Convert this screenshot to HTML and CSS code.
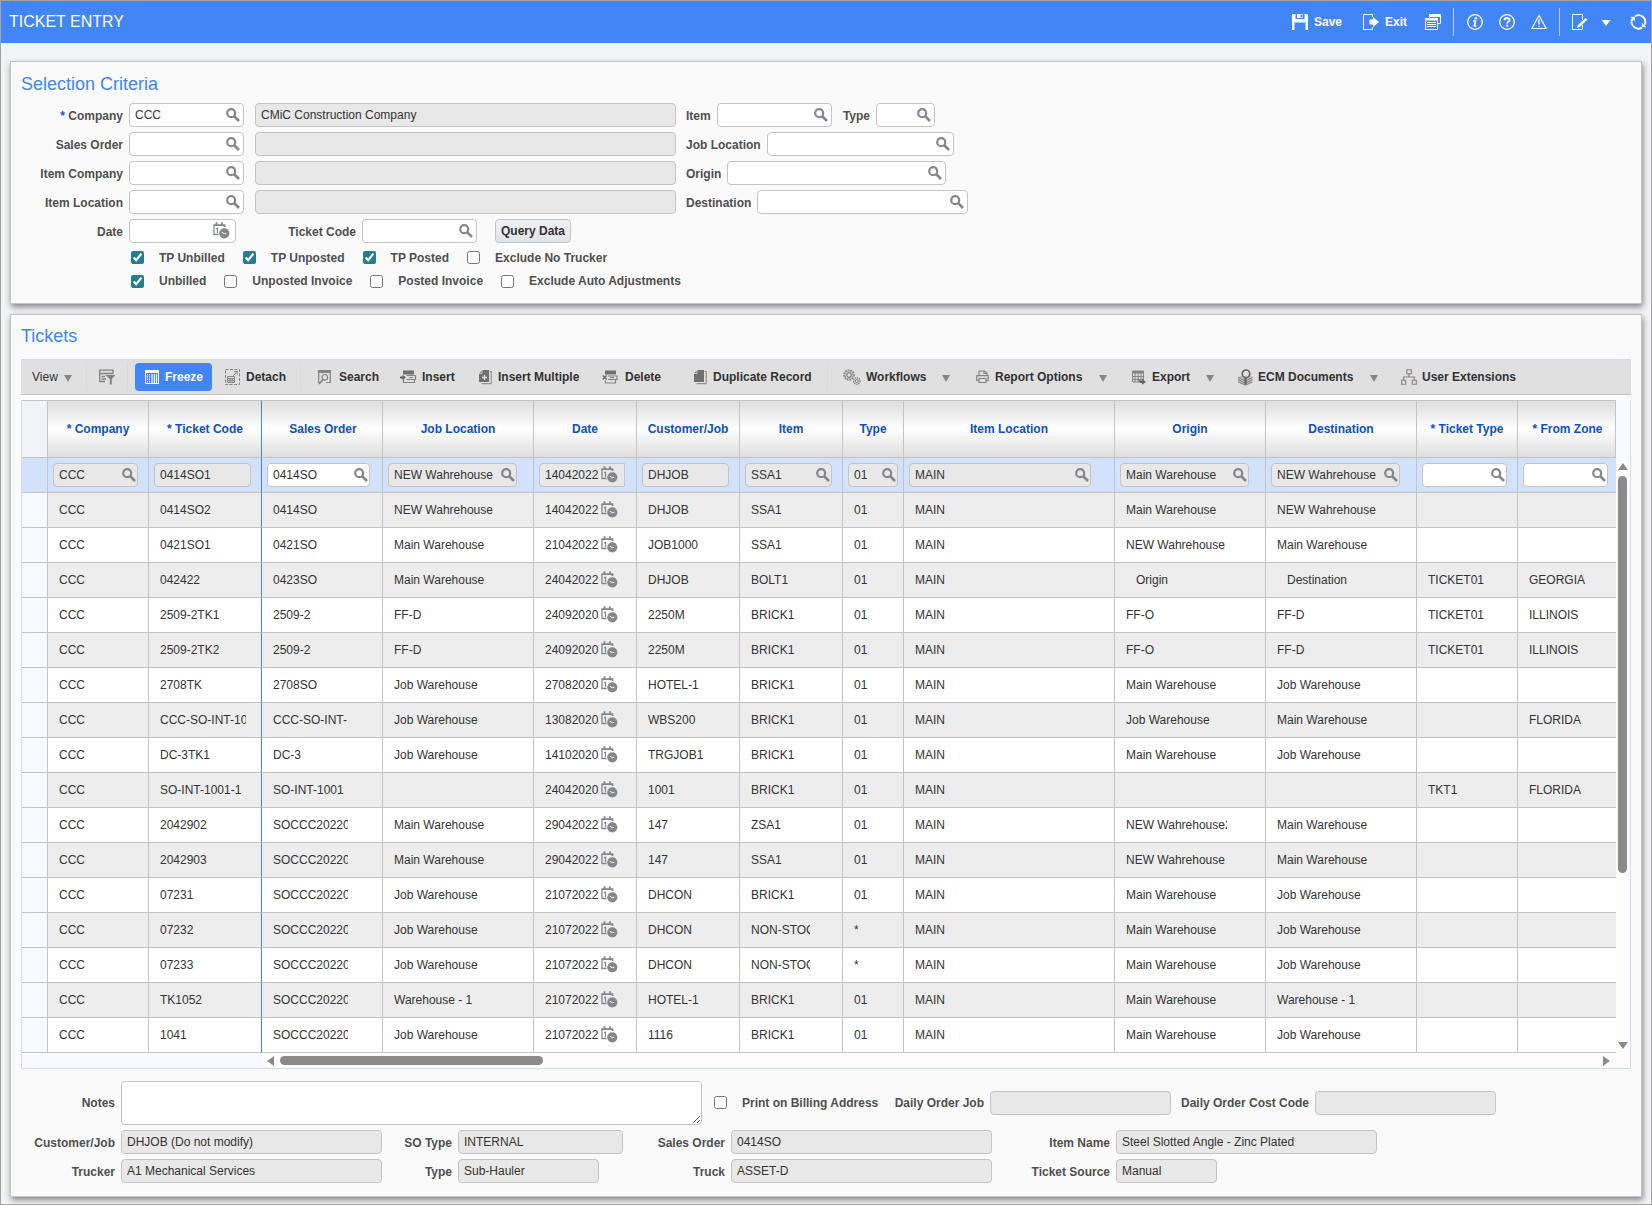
FILE: index.html
```
<!DOCTYPE html>
<html lang="en">
<head>
    <meta charset="UTF-8">
    <meta name="viewport" content="width=device-width, initial-scale=1.0">
    <title>Ticket Entry</title>
    <link rel="stylesheet" href="styles.css">
</head>
<body>
    <svg class="defs" width="0" height="0">
        <symbol id="search" viewBox="0 0 14 14">
            <circle cx="5.2" cy="5.2" r="4" fill="none" stroke="#84888c" stroke-width="2.2"/>
            <path d="M8 8L13 13" stroke="#84888c" stroke-width="2.6"/>
        </symbol>
        <symbol id="calendar" viewBox="0 0 17 17">
            <path d="M5.500 12.500H1V3" fill="none" stroke="#84888c" stroke-width="1.300"/>
            <path d="M.4 3.200H11.500V5" fill="none" stroke="#84888c" stroke-width="1.800"/>
            <path d="M3.500 .3v3M9 .3v3" stroke="#84888c" stroke-width="1.800"/>
            <path d="M3 7l1.500-.8v5" fill="none" stroke="#84888c" stroke-width="1.200"/>
            <circle cx="11.300" cy="11.300" r="5.100" fill="#84888c"/>
            <path d="M8.800 10.200l2.500 1.500 2-.4" fill="none" stroke="#fff"/>
        </symbol>
    </svg>

    <header class="header">
        <h1>TICKET ENTRY</h1>
        <div class="actions">
            <a class="action save">
                <svg width="16" height="16" viewBox="0 0 16 16"><path d="M0 0h15l1 1v15H0z" fill="#fff"/><path d="M3.500 0v5h9V0M2.500 16V8.500h11V16" fill="#4285f4"/><path d="M5 0h6v4H5z" fill="#fff"/><path d="M8.500 .5h2v3h-2z" fill="#4285f4"/></svg>
                Save
            </a>
            <a class="action exit">
                <svg width="16" height="16" viewBox="0 0 16 16"><path d="M9.500 3V.5h-9v15h9V13" fill="none" stroke="#fff"/><path d="M6.500 5.500H10V3l6 5-6 5v-2.500H6.500z" fill="#fff"/></svg>
                Exit
            </a>
            <a class="action list">
                <svg width="16" height="16" viewBox="0 0 16 16"><path d="M4.500 4V.5h11v9H13" fill="none" stroke="#fff"/><path d="M4 .5h12v2.500H4z" fill="#fff"/><path d="M.5 4.500h12v11H.5z" fill="#4285f4" stroke="#fff"/><path d="M0 4h13v2.500H0z" fill="#fff"/><path d="M2 8.500h9M2 10.500h9M2 12.500h9" stroke="#fff"/></svg>
            </a>
            <i class="divider"></i>
            <svg class="info" width="16" height="16" viewBox="0 0 16 16"><circle cx="8" cy="8" r="7.300" fill="none" stroke="#fff" stroke-width="1.300"/><circle cx="9" cy="4.300" r="1.300" fill="#fff"/><path d="M6 7h2.500L7.300 12h2" fill="none" stroke="#fff" stroke-width="1.700"/></svg>
            <svg class="help" width="16" height="16" viewBox="0 0 16 16"><circle cx="8" cy="8" r="7.300" fill="none" stroke="#fff" stroke-width="1.300"/><path d="M5.600 6.300c0-3 4.900-2.900 4.900-.3 0 1.700-2.300 1.600-2.300 3.500" fill="none" stroke="#fff" stroke-width="1.900"/><path d="M7.200 10.700h2v2h-2z" fill="#fff"/></svg>
            <svg class="warn" width="16" height="16" viewBox="0 0 16 16"><path d="M8 1.500L15.200 14.500H.8z" fill="none" stroke="#fff" stroke-width="1.200"/><path d="M8 5.500v5M8 11.700v1.300" stroke="#fff" stroke-width="1.400"/></svg>
            <i class="divider second"></i>
            <svg class="edit" width="16" height="16" viewBox="0 0 16 16"><path d="M10.500 11v4.500H.5V.5h10V6" fill="none" stroke="#fff"/><path d="M5 14l1-3 7.500-7L15.500 5.500 8 12.700z" fill="#fff"/></svg>
            <svg class="down" width="10" height="6" viewBox="0 0 10 6"><path d="M.5 0h9L5 6z" fill="#fff"/></svg>
            <svg class="refresh" width="17" height="16" viewBox="0 0 17 16"><path d="M4.500 13.300A6.600 6.600 0 0 1 2.200 5M5 2.300a6.600 6.600 0 0 1 7.500 .2M13.800 3.700a6.600 6.600 0 0 1 .8 7M12 13.600a6.600 6.600 0 0 1-7.500-.3M12.500 2.500l1.300 1.200" fill="none" stroke="#fff" stroke-width="1.900"/><path d="M.3 2.700h4.700v4.500zM16.500 13.300h-4.700V8.800z" fill="#fff"/></svg>
        </div>
    </header>

    <section class="panel criteria">
        <h2>Selection Criteria</h2>
        <div class="row">
            <label class="w102"><b class="req">*</b> Company</label>
            <div class="field w115"><span>CCC</span><svg><use href="#search"/></svg></div>
            <div class="field off w421"><span>CMiC Construction Company</span></div>
            <label class="right">Item</label>
            <div class="field w115"><span></span><svg><use href="#search"/></svg></div>
            <label class="type">Type</label>
            <div class="field w59"><span></span><svg><use href="#search"/></svg></div>
        </div>
        <div class="row">
            <label class="w102">Sales Order</label>
            <div class="field w115"><span></span><svg><use href="#search"/></svg></div>
            <div class="field off w421"></div>
            <label class="right w75">Job Location</label>
            <div class="field w187"><span></span><svg><use href="#search"/></svg></div>
        </div>
        <div class="row">
            <label class="w102">Item Company</label>
            <div class="field w115"><span></span><svg><use href="#search"/></svg></div>
            <div class="field off w421"></div>
            <label class="right w35">Origin</label>
            <div class="field w219"><span></span><svg><use href="#search"/></svg></div>
        </div>
        <div class="row">
            <label class="w102">Item Location</label>
            <div class="field w115"><span></span><svg><use href="#search"/></svg></div>
            <div class="field off w421"></div>
            <label class="right w65">Destination</label>
            <div class="field w211"><span></span><svg><use href="#search"/></svg></div>
        </div>
        <div class="row">
            <label class="w102">Date</label>
            <div class="field date w107"><span></span><svg class="cal"><use href="#calendar"/></svg></div>
            <label class="w120">Ticket Code</label>
            <div class="field w115"><span></span><svg><use href="#search"/></svg></div>
            <button class="query">Query Data</button>
        </div>
        <div class="checks">
            <label><input type="checkbox" checked>TP Unbilled</label>
            <label><input type="checkbox" checked>TP Unposted</label>
            <label><input type="checkbox" checked>TP Posted</label>
            <label><input type="checkbox">Exclude No Trucker</label>
        </div>
        <div class="checks second">
            <label><input type="checkbox" checked>Unbilled</label>
            <label><input type="checkbox">Unposted Invoice</label>
            <label><input type="checkbox">Posted Invoice</label>
            <label><input type="checkbox">Exclude Auto Adjustments</label>
        </div>
    </section>

    <section class="panel tickets">
        <h2>Tickets</h2>
        <div class="toolbar">
            <div class="tool view sep">View <i class="arrow"></i></div>
            <div class="tool qbe sep">
                <svg width="17" height="16" viewBox="0 0 17 16" fill="none" stroke="#848484" stroke-width="1.300"><path d="M14 5V1.200H.7V12.500H6M.7 4.500H14M2.500 7.500H6M2.500 10H7M0 1.200h14"/><path d="M6.500 6h10l-3.700 4v5.500h-2V10z" fill="#848484" stroke="none"/></svg>
            </div>
            <div class="tool"><a class="freeze">
                <svg width="14" height="14" viewBox="0 0 14 14"><path d="M.5 .5h13v13H.5z" fill="none" stroke="#fff"/><path d="M0 0h14v3H0z" fill="#fff"/><path d="M2.500 4v9M4.500 4v9" stroke="#fff" stroke-dasharray="1.500 .8"/><path d="M7 4v9M9.300 4v9M11.500 4v9" stroke="#fff" stroke-width="1.200"/></svg>Freeze</a></div>
            <div class="tool sep detach">
                <svg width="15" height="16" viewBox="0 0 15 16"><path d="M.5 .5h14v15H.5z" fill="none" stroke="#848484" stroke-dasharray="3 1.500"/><path d="M2.500 7.500h7v6h-7zM2.500 9.500h7M2.500 11.500h7M4.800 9.500v4M7.200 9.500v4M8.500 6.500l3.500-4M9 2.500h3.200v3" fill="none" stroke="#848484"/></svg>Detach</div>
            <div class="tool">
                <svg width="15" height="16" viewBox="0 0 15 16"><path d="M2 13.500H.7V1.500h11.600v12H8" fill="none" stroke="#848484" stroke-width="1.200"/><path d="M0 1h13v3H0z" fill="#848484"/><circle cx="6.800" cy="8.300" r="2.800" fill="none" stroke="#848484" stroke-width="1.200"/><path d="M5 10.500L1 15" stroke="#848484" stroke-width="1.800"/></svg>Search</div>
            <div class="tool">
                <svg width="16" height="16" viewBox="0 0 16 16"><path d="M3 1.500h11v4H3z" fill="#707070"/><path d="M6.500 6.500h9v4h-9M3.500 10.500v3h11v-3M9 8.500h4" fill="none" stroke="#848484" stroke-width="1.200"/><path d="M0 7.500h2.500V5.800l3.500 2.700-3.500 2.700V9.500H0z" fill="#666"/></svg>Insert</div>
            <div class="tool multi">
                <svg width="14" height="16" viewBox="0 0 14 16"><path d="M3.500 1H10v12H0V4.500z" fill="#707070"/><path d="M10.700 2.500h1.500v12.200H2.500" fill="none" stroke="#848484"/><path d="M3 1v3.500H0" fill="none" stroke="#ccc"/><path d="M5.500 6v5M3 8.500h5" stroke="#e0e0e0" stroke-width="1.300"/></svg>Insert Multiple</div>
            <div class="tool">
                <svg width="17" height="16" viewBox="0 0 17 16"><path d="M3 1.500h11v4H3z" fill="#707070"/><path d="M6 7h9v3.500H6M3.500 11.500v2.500h10v-3M8 8.700h4" fill="none" stroke="#848484" stroke-width="1.200"/><path d="M.7 6.500l4 4M4.700 6.500l-4 4" stroke="#666" stroke-width="1.300"/></svg>Delete</div>
            <div class="tool sep dup">
                <svg width="13" height="16" viewBox="0 0 13 16"><path d="M3.500 1H10v12H0V4.500z" fill="#707070"/><path d="M10.700 2.500h1.500v12.200H2.500" fill="none" stroke="#848484"/><path d="M3 1v3.500H0" fill="none" stroke="#ccc"/></svg>Duplicate Record</div>
            <div class="tool">
                <svg class="gear" width="17" height="16" viewBox="0 0 17 16" fill="none" stroke="#848484"><circle cx="6" cy="6" r="5" stroke-width="1.600" stroke-dasharray="1.700 1"/><circle cx="6" cy="6" r="4" stroke-width=".6"/><circle cx="6" cy="6" r="2.300" stroke-width="1.200"/><circle cx="13.800" cy="12" r="3.200" stroke-width="1.400" stroke-dasharray="1.300 .8"/><circle cx="13.800" cy="12" r="1.500"/></svg>Workflows <i class="arrow"></i></div>
            <div class="tool report">
                <svg width="14" height="16" viewBox="0 0 14 16" fill="none" stroke="#848484" stroke-width="1.200"><path d="M3 6V2h5.500L11 4v2M2.500 11.500H.8V6.600h11.400v4.900h-1.700M3 9.500h7v4H3z"/><path d="M8 2v2.500h3"/></svg>Report Options <i class="arrow"></i></div>
            <div class="tool">
                <svg width="14" height="16" viewBox="0 0 14 16"><path d="M.5 2h11v11H.5zM.5 7.500h11M.5 10.300h11M3 2v11M6 2v11M9 2v11" fill="none" stroke="#848484"/><path d="M0 2h12v2.500H0z" fill="#848484"/><path d="M6.500 8c0 3 1 3.800 3.500 3.800V10l4 3-4 2.800v-1.700C7 14 6 12 6.500 8z" fill="#666"/></svg>Export <i class="arrow"></i></div>
            <div class="tool ecm">
                <svg width="15" height="17" viewBox="0 0 15 17"><path d="M0 8l4-1.500 3.500 2L11 6.500 14.500 8v5L7.500 16.500 0 13z" fill="#bbb"/><path d="M0 8.500l7.500 3.500 7-3.500M0 10.700l7.500 3.500 7-3.500M0 13l7.500 3.200 7-3.200" fill="none" stroke="#808080" stroke-width=".9"/><circle cx="8" cy="4.800" r="3.800" fill="#ddd" stroke="#666" stroke-width="1.700"/><path d="M7.500 8.500v7" stroke="#666" stroke-width="2.200"/></svg>ECM Documents <i class="arrow"></i></div>
            <div class="tool user">
                <svg width="16" height="16" viewBox="0 0 16 16" fill="none" stroke="#848484" stroke-width="1.100"><path d="M5.800 .7h4.500v4H5.800zM.6 11.300h4v4h-4zM11.300 11.300h4v4h-4zM8 4.700V8M2.600 11.300V8h10.800v3.300"/></svg>User Extensions</div>
        </div>

        <div class="grid-frame">
            <table class="grid">
                <colgroup>
                    <col class="c26"><col class="c101"><col class="c113"><col class="c121"><col class="c151"><col class="c103"><col class="c103"><col class="c103"><col class="c61"><col class="c211"><col class="c151"><col class="c151"><col class="c101"><col class="c98">
                </colgroup>
                <thead>
                    <tr>
                        <th></th><th>* Company</th><th>* Ticket Code</th><th>Sales Order</th><th>Job Location</th><th>Date</th><th>Customer/Job</th><th>Item</th><th>Type</th><th>Item Location</th><th>Origin</th><th>Destination</th><th>* Ticket Type</th><th>* From Zone</th>
                    </tr>
                </thead>
                <tbody id="rows"></tbody>
            </table>
            <div class="vscroll">
                <i class="up"></i><i class="thumb"></i><i class="dn"></i>
            </div>
            <div class="hscroll">
                <div class="frozen"></div>
                <i class="lt"></i><i class="thumb"></i><i class="rt"></i>
            </div>
        </div>

        <div class="row notes">
            <label class="w94">Notes</label>
            <textarea></textarea>
            <label class="print"><input type="checkbox">Print on Billing Address</label>
            <label class="w100">Daily Order Job</label>
            <div class="field off w181"></div>
            <label class="w138">Daily Order Cost Code</label>
            <div class="field off w181"></div>
        </div>
        <div class="row">
            <label class="w94">Customer/Job</label>
            <div class="field off w261"><span>DHJOB (Do not modify)</span></div>
            <label class="w70">SO Type</label>
            <div class="field off w165"><span>INTERNAL</span></div>
            <label class="w102">Sales Order</label>
            <div class="field off w261"><span>0414SO</span></div>
            <label class="w118">Item Name</label>
            <div class="field off w261"><span>Steel Slotted Angle - Zinc Plated</span></div>
        </div>
        <div class="row">
            <label class="w94">Trucker</label>
            <div class="field off w261"><span>A1 Mechanical Services</span></div>
            <label class="w70">Type</label>
            <div class="field off w141"><span>Sub-Hauler</span></div>
            <label class="w126">Truck</label>
            <div class="field off w261"><span>ASSET-D</span></div>
            <label class="w118">Ticket Source</label>
            <div class="field off w101"><span>Manual</span></div>
        </div>
    </section>

    <script>
        // company, code, sales order, job loc, date, customer, item, type, item loc, origin, destination, ticket type, zone
        const tickets = [
            ['CCC', '0414SO1', '0414SO', 'NEW Wahrehouse', '14042022', 'DHJOB', 'SSA1', '01', 'MAIN', 'Main Warehouse', 'NEW Wahrehouse', '', ''],
            ['CCC', '0414SO2', '0414SO', 'NEW Wahrehouse', '14042022', 'DHJOB', 'SSA1', '01', 'MAIN', 'Main Warehouse', 'NEW Wahrehouse', '', ''],
            ['CCC', '0421SO1', '0421SO', 'Main Warehouse', '21042022', 'JOB1000', 'SSA1', '01', 'MAIN', 'NEW Wahrehouse', 'Main Warehouse', '', ''],
            ['CCC', '042422', '0423SO', 'Main Warehouse', '24042022', 'DHJOB', 'BOLT1', '01', 'MAIN', '\u00a0\u00a0\u00a0Origin', '\u00a0\u00a0\u00a0Destination', 'TICKET01', 'GEORGIA'],
            ['CCC', '2509-2TK1', '2509-2', 'FF-D', '24092020', '2250M', 'BRICK1', '01', 'MAIN', 'FF-O', 'FF-D', 'TICKET01', 'ILLINOIS'],
            ['CCC', '2509-2TK2', '2509-2', 'FF-D', '24092020', '2250M', 'BRICK1', '01', 'MAIN', 'FF-O', 'FF-D', 'TICKET01', 'ILLINOIS'],
            ['CCC', '2708TK', '2708SO', 'Job Warehouse', '27082020', 'HOTEL-1', 'BRICK1', '01', 'MAIN', 'Main Warehouse', 'Job Warehouse', '', ''],
            ['CCC', 'CCC-SO-INT-10', 'CCC-SO-INT-', 'Job Warehouse', '13082020', 'WBS200', 'BRICK1', '01', 'MAIN', 'Job Warehouse', 'Main Warehouse', '', 'FLORIDA'],
            ['CCC', 'DC-3TK1', 'DC-3', 'Job Warehouse', '14102020', 'TRGJOB1', 'BRICK1', '01', 'MAIN', 'Main Warehouse', 'Job Warehouse', '', ''],
            ['CCC', 'SO-INT-1001-1', 'SO-INT-1001', '', '24042020', '1001', 'BRICK1', '01', 'MAIN', '', '', 'TKT1', 'FLORIDA'],
            ['CCC', '2042902', 'SOCCC20220', 'Main Warehouse', '29042022', '147', 'ZSA1', '01', 'MAIN', 'NEW Wahrehouse2', 'Main Warehouse', '', ''],
            ['CCC', '2042903', 'SOCCC20220', 'Main Warehouse', '29042022', '147', 'SSA1', '01', 'MAIN', 'NEW Wahrehouse', 'Main Warehouse', '', ''],
            ['CCC', '07231', 'SOCCC20220', 'Job Warehouse', '21072022', 'DHCON', 'BRICK1', '01', 'MAIN', 'Main Warehouse', 'Job Warehouse', '', ''],
            ['CCC', '07232', 'SOCCC20220', 'Job Warehouse', '21072022', 'DHCON', 'NON-STOC', '*', 'MAIN', 'Main Warehouse', 'Job Warehouse', '', ''],
            ['CCC', '07233', 'SOCCC20220', 'Job Warehouse', '21072022', 'DHCON', 'NON-STOC', '*', 'MAIN', 'Main Warehouse', 'Job Warehouse', '', ''],
            ['CCC', 'TK1052', 'SOCCC20220', 'Warehouse - 1', '21072022', 'HOTEL-1', 'BRICK1', '01', 'MAIN', 'Main Warehouse', 'Warehouse - 1', '', ''],
            ['CCC', '1041', 'SOCCC20220', 'Job Warehouse', '21072022', '1116', 'BRICK1', '01', 'MAIN', 'Main Warehouse', 'Job Warehouse', '', '']
        ];
        const plain = [1, 5];        // no lookup icon
        const editable = [2, 11, 12];
        const DATE = 4;

        document.getElementById('rows').innerHTML = tickets.map((ticket, r) => {
            const cells = ticket.map((value, c) => {
                let icon = '';
                if (c === DATE) {
                    icon = '<svg class="cal"><use href="#calendar"/></svg>';
                } else if (!plain.includes(c)) {
                    icon = r === 0 ? '<svg><use href="#search"/></svg>' : '<svg></svg>';
                }
                const off = editable.includes(c) ? '' : ' off';
                return `<td><div class="field${off}"><span>${value}</span>${icon}</div></td>`;
            }).join('');
            return `<tr${r === 0 ? ' class="selected"' : ''}><td></td>${cells}</tr>`;
        }).join('');
    </script>
</body>
</html>
```
FILE: styles.css
```
* {
    box-sizing: border-box;
}
body {
    margin: 0;
    width: 1652px;
    height: 1205px;
    overflow: hidden;
    border: 1px solid #a3a3a3;
    background: #f1f3f5;
    font-family: "Liberation Sans", Arial, sans-serif;
    font-size: 12px;
    color: #333;
}
.defs {
    display: block;
}
svg {
    flex: none;
}

/* header */
.header {
    display: flex;
    align-items: center;
    justify-content: space-between;
    height: 42px;
    padding: 0 4px 0 8px;
    background: #4285f4;
    color: #fff;
}
.header h1 {
    margin: 0;
    font-size: 16px;
    font-weight: normal;
}
.actions {
    display: flex;
    align-items: center;
    font-weight: bold;
}
.action {
    display: flex;
    align-items: center;
    gap: 6px;
}
.save {
    width: 71px;
}
.exit {
    width: 62px;
}
.divider {
    width: 1px;
    height: 28px;
    margin: 0 13px 0 12px;
    background: #b9d2fb;
}
.divider.second {
    margin: 0 12px;
}
.help, .warn {
    margin-left: 16px;
}
.down {
    margin: 2px 19px 0 13px;
}

/* panels */
.panel {
    width: 1632px;
    margin: 18px 0 0 9px;
    padding: 0 10px;
    border: 1px solid #c4c4c4;
    background: #fafafa;
    box-shadow: 1px 3px 6px rgba(0,0,0,0.45);
}
.criteria {
    height: 243px;
}
.tickets {
    height: 883px;
    margin-top: 10px;
}
.panel h2 {
    margin: 0;
    height: 41px;
    padding-top: 12px;
    font-size: 18px;
    font-weight: normal;
    line-height: 21px;
    color: #4285f4;
}
.tickets h2 {
    height: 44px;
    padding-top: 11px;
}
.row {
    display: flex;
    align-items: center;
    margin-bottom: 5px;
}
label {
    flex: none;
    font-weight: bold;
    color: #4f4f4f;
    text-align: right;
    white-space: nowrap;
}
.row > label {
    margin-right: 6px;
    padding-top: 1px;
}
.req {
    color: #1a57c9;
}
.field {
    display: flex;
    align-items: center;
    flex: none;
    height: 24px;
    padding: 0 3px 0 5px;
    border: 1px solid #c4c4c4;
    border-radius: 4px;
    background: #fff;
}
.field.off {
    background: #e8e8e8;
}
.field span {
    flex: 1;
    min-width: 0;
    overflow: hidden;
    white-space: nowrap;
}
.field svg {
    width: 14px;
    height: 14px;
    margin-left: 4px;
}
.field svg.cal {
    width: 17px;
    height: 17px;
}
.field.date svg.cal {
    margin: -2px 2px 0 0;
}
.w421 {
    margin-left: 11px;
}
.right {
    width: 25px;
    margin-left: 10px;
    text-align: left;
}
.type { width: 38px; }
.w35 { width: 35px; }
.w59 { width: 59px; }
.w65 { width: 65px; }
.w70 { width: 70px; }
.w75 { width: 75px; }
.w94 { width: 94px; }
.w100 { width: 100px; }
.w101 { width: 101px; }
.w102 { width: 102px; }
.w107 { width: 107px; }
.w115 { width: 115px; }
.w118 { width: 118px; }
.w120 { width: 120px; }
.w126 { width: 126px; }
.w138 { width: 138px; }
.w141 { width: 141px; }
.w165 { width: 165px; }
.w181 { width: 181px; }
.w187 { width: 187px; }
.w211 { width: 211px; }
.w219 { width: 219px; }
.w261 { width: 261px; }
.w421 { width: 421px; }
.query {
    width: 76px;
    height: 24px;
    margin-left: 18px;
    padding: 0;
    border: 1px solid #c4c4c4;
    border-radius: 4px;
    background: linear-gradient(#f0f2f4, #dfe4e9);
    font: bold 12px "Liberation Sans", Arial, sans-serif;
    color: #333;
}
.checks {
    display: flex;
    gap: 18px;
    height: 23px;
    margin-bottom: 1px;
    padding-left: 110px;
}
.row + .checks {
    margin-top: -2px;
}
.checks label, .print {
    display: flex;
    align-items: center;
}
.checks.second label {
    height: 22px;
}
input[type="checkbox"] {
    width: 13px;
    height: 13px;
    margin: 0 15px 0 0;
    accent-color: #237f8f;
}
.checks.second input {
    margin-top: 1px;
}

/* toolbar */
.toolbar {
    display: grid;
    grid-template-columns: 67px 36px 90px 93px 82px 79px 123px 92px 149px 133px 156px 106px 163px 1fr;
    align-items: center;
    height: 36px;
    padding-left: 11px;
    border-top: 1px solid #d3deee;
    border-bottom: 1px solid #c4c4c4;
    background: #e0e0e0;
}
.tool {
    display: flex;
    align-items: center;
    height: 28px;
    font-weight: bold;
    white-space: nowrap;
}
.tool svg {
    margin-right: 6px;
    overflow: visible;
}
.multi svg, .report svg, .ecm svg, .user svg {
    margin-right: 5px;
}
.sep {
    border-right: 1px solid #d3dce4;
}
.view {
    margin-right: 12px;
    font-weight: normal;
}
.qbe {
    margin-right: 7px;
}
.detach {
    margin-right: 17px;
}
.dup {
    margin-right: 15px;
}
.freeze {
    display: flex;
    align-items: center;
    width: 77px;
    height: 28px;
    padding-left: 10px;
    border-radius: 4px;
    background: #4285f4;
    color: #fff;
}
.arrow {
    margin: 3px 0 0 16px;
    border: 4.5px solid transparent;
    border-top: 7px solid #84888c;
    border-bottom: 0;
}
.report .arrow, .ecm .arrow {
    margin-left: 17px;
}
.view .arrow {
    margin-left: 6px;
}

/* ticket grid */
.grid-frame {
    display: grid;
    grid-template-columns: 1594px 14px;
    grid-template-rows: 653px 15px;
    height: 669px;
    margin: 5px 0 12px;
    width: 1610px;
    border: 1px solid #d3dee8;
    border-top: 0;
    background: #fcfcfc;
}
.grid {
    table-layout: fixed;
    width: 1594px;
    border-collapse: separate;
    border-spacing: 0;
}
.c26 { width: 26px; }
.c61 { width: 61px; }
.c98 { width: 98px; }
.c101 { width: 101px; }
.c103 { width: 103px; }
.c113 { width: 113px; }
.c121 { width: 121px; }
.c151 { width: 151px; }
.c211 { width: 211px; }
.grid th {
    height: 58px;
    padding: 0 0 1px;
    border: solid #c4c4c4;
    border-width: 1px 1px 1px 0;
    background: linear-gradient(#dedede, #fff 50%, #dedede);
    color: #0b50c4;
    white-space: nowrap;
}
.grid th:first-child {
    background: #f1f3f9;
}
.grid th:nth-child(4), .grid th:last-child {
    padding-left: 2px;
}
.grid td {
    height: 35px;
    padding: 0 10px 0 5px;
    border: solid #c4c4c4;
    border-width: 0 1px 1px 0;
    background: #fff;
}
.grid td:last-child {
    padding-right: 8px;
    border-right: 0;
}
.grid tr:nth-child(even) td {
    background: #ededed;
}
.grid tbody td:first-child, .grid tbody tr:nth-child(even) td:first-child {
    background: #f7f9ff;
}
.grid .selected td, .grid tbody .selected td:first-child {
    background: #d2e2fc;
}
.grid th:nth-child(3), .grid td:nth-child(3) {
    border-right-color: #4285f4;
}
.grid td:nth-child(4) {
    padding-right: 12px;
}
.grid td:nth-child(5), .grid td:nth-child(11), .grid td:nth-child(12) {
    padding-right: 16px;
}
.grid td:nth-child(6) {
    padding-right: 11px;
}
.grid td:nth-child(9) {
    padding-right: 5px;
}
.grid td:nth-child(10) {
    padding-right: 23px;
}
.grid .field {
    padding-right: 1px;
}
.grid .field span + svg {
    margin-left: 6px;
}
.grid td:nth-child(3) .field {
    padding-right: 4px;
}
.grid td:nth-child(6) span {
    flex: none;
    width: 54px;
}
.grid td:nth-child(6) .field {
    padding-right: 0;
    border-radius: 4px 0 0 4px;
}
.grid td:nth-child(6) .field svg {
    margin: -2px 0 0 2px;
}
.grid tr:not(.selected) .field {
    border-color: transparent;
    background: none;
}
.vscroll {
    display: flex;
    flex-direction: column;
    align-items: center;
    padding: 63px 1px 0 0;
    background: linear-gradient(#f8faff 58px, #fcfcfc 58px);
}
.vscroll .thumb {
    width: 9px;
    height: 397px;
    margin: 6px 0 169px;
    border-radius: 5px;
    background: #8b8b8b;
}
.up {
    border: 5px solid transparent;
    border-bottom: 7px solid #8b8b8b;
    border-top: 0;
}
.dn {
    border: 5px solid transparent;
    border-top: 7px solid #8b8b8b;
    border-bottom: 0;
}
.hscroll {
    grid-column: 1 / 3;
    display: flex;
    align-items: center;
}
.hscroll .frozen {
    width: 240px;
    height: 15px;
    background: #f8faff;
}
.hscroll .thumb {
    width: 263px;
    height: 9px;
    margin: 0 1060px 0 6px;
    border-radius: 5px;
    background: #8b8b8b;
}
.lt {
    margin-left: 5px;
    border: 5px solid transparent;
    border-right: 7px solid #8b8b8b;
    border-left: 0;
}
.rt {
    border: 5px solid transparent;
    border-left: 7px solid #8b8b8b;
    border-right: 0;
}

/* ticket details */
.notes {
    height: 44px;
}
.notes > label {
    padding: 0 0 1px;
}
.notes .field {
    margin-bottom: 1px;
}
textarea {
    width: 581px;
    height: 44px;
    margin: 0;
    border: 1px solid #c4c4c4;
    border-radius: 4px;
    background: #fff;
}
.row > .print {
    width: 170px;
    margin: 0 0 0 12px;
}
```
